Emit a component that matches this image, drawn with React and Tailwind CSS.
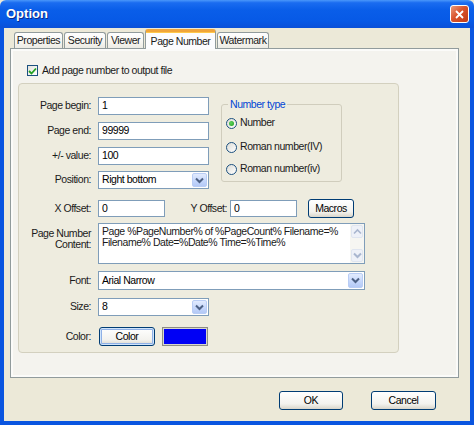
import React from "react";

const Chevron = ({ color = "#4d6185" }) => (
  <svg width="9" height="7" viewBox="0 0 9 7">
    <path d="M1 1.5 L4.5 5 L8 1.5" fill="none" stroke={color} strokeWidth="2" />
  </svg>
);

const ChevronUp = ({ color = "#a9b6cf" }) => (
  <svg width="9" height="7" viewBox="0 0 9 7">
    <path d="M1 5.5 L4.5 2 L8 5.5" fill="none" stroke={color} strokeWidth="1.6" />
  </svg>
);

function TextBox({ value, w, h = "h-[18px]" }) {
  return (
    <div className={`${w} ${h} border border-[#7f9db9] bg-white flex items-center pl-[3px] text-black`}>
      {value}
    </div>
  );
}

function Combo({ value, w, h = "h-[18px]" }) {
  return (
    <div className={`${w} ${h} border border-[#7f9db9] bg-white flex items-center pl-[3px] pr-px text-black`}>
      <span className="flex-1">{value}</span>
      <div className="w-[15px] h-[calc(100%-2px)] rounded-[2px] border border-[#b9cdf5] bg-[linear-gradient(#e2ebfe,#c4d6fb_60%,#b4c9f6)] flex items-center justify-center">
        <Chevron />
      </div>
    </div>
  );
}

function Radio({ checked, label }) {
  return (
    <div className="h-[14px] flex items-center gap-[3px] pl-[4px]">
      <div className="w-[11px] h-[11px] rounded-full border border-[#1c5180] bg-[linear-gradient(135deg,#dcdcd6,#ffffff)] flex items-center justify-center">
        {checked && <div className="w-[5px] h-[5px] rounded-full bg-[radial-gradient(circle_at_40%_40%,#5fd35f,#1e9d1e)]" />}
      </div>
      <span>{label}</span>
    </div>
  );
}

function XPButton({ children, w, focused }) {
  return (
    <div
      className={`${w} h-[19px] rounded-[3px] border border-[#003c74] bg-[linear-gradient(#ffffff,#f3f2ee_70%,#d9d5ca)] flex items-center justify-center text-black ${
        focused ? "shadow-[inset_0_0_0_1px_#cfe4fb,inset_0_0_0_2px_#8fb0e6]" : ""
      }`}
    >
      {children}
    </div>
  );
}

function Label({ children, w = "w-[72px]" }) {
  return <div className={`${w} text-right shrink-0`}>{children}</div>;
}

export default function App() {
  const tabs = [
    { t: "Properties", w: "w-[49px]" },
    { t: "Security", w: "w-[42px]" },
    { t: "Viewer", w: "w-[37px]" },
    { t: "Page Number", w: "w-[71px]", sel: true },
    { t: "Watermark", w: "w-[52px]" },
  ];
  return (
    <div className="w-[474px] h-[425px] flex flex-col font-['Liberation_Sans',Arial,sans-serif] text-[10.5px] tracking-[-0.45px] text-[#1a1a1a] bg-[#ece9d8]">
      {/* Title bar */}
      <div className="h-[28px] shrink-0 rounded-t-[6px] bg-[linear-gradient(#4a97fa_0%,#1a6cf0_10%,#0a5ee9_35%,#0759e6_75%,#0a50d8_100%)] flex items-center justify-between pl-[6px] pr-[5px]">
        <span className="text-white font-bold text-[13px] tracking-normal [text-shadow:1px_1px_0_#0a2a8a]">Option</span>
        <div className="w-[19px] h-[18px] rounded-[3px] border border-white bg-[linear-gradient(135deg,#eb9b7c,#d9532c_45%,#c13c17)] flex items-center justify-center">
          <svg width="9" height="9" viewBox="0 0 9 9">
            <path d="M1 1 L8 8 M8 1 L1 8" stroke="white" strokeWidth="1.8" />
          </svg>
        </div>
      </div>

      {/* Body */}
      <div className="flex-1 border-x-[4px] border-b-[4px] border-[#0a55e0] flex flex-col pt-px">
        {/* Tabs */}
        <div className="h-[19px] flex items-end gap-[1px] pl-[10px] relative z-10">
          {tabs.map((tab) =>
            tab.sel ? (
              <div
                key={tab.t}
                className={`${tab.w} h-[20px] -mb-px border-x border-[#919b9c] border-t-[3px] border-t-[#f0a53a] rounded-t-[3px] bg-[#fcfcfe] flex items-start justify-center pt-[2px] shadow-[inset_0_1px_0_#ffc84a]`}
              >
                {tab.t}
              </div>
            ) : (
              <div
                key={tab.t}
                className={`${tab.w} h-[16px] border border-b-0 border-[#919b9c] rounded-t-[3px] bg-[linear-gradient(#ffffff,#f6f5f0_60%,#ecebe4)] flex items-center justify-center pt-px`}
              >
                {tab.t}
              </div>
            )
          )}
        </div>

        {/* Panel */}
        <div className="ml-[6px] w-[449px] h-[330px] shrink-0 border border-[#919b9c] bg-[#f4f3ee] shadow-[inset_0_0_0_2px_#fbfbf9] flex flex-col">
          {/* checkbox row */}
          <div className="mt-[16px] ml-[16px] h-[11px] flex items-center gap-[4px]">
            <div className="w-[11px] h-[11px] border border-[#1c5180] bg-[linear-gradient(135deg,#e4e3dc,#ffffff)] flex items-center justify-center">
              <svg width="9" height="8" viewBox="0 0 9 8">
                <path d="M1 4 L3.5 6.5 L8 1.5" fill="none" stroke="#21a121" strokeWidth="1.8" />
              </svg>
            </div>
            <span>Add page number to output file</span>
          </div>

          {/* Group box */}
          <div className="mt-[7px] ml-[7px] w-[381px] h-[270px] border border-[#d3d0bf] rounded-[4px] bg-[#eeecdf] flex flex-col">
            <div className="flex">
              {/* left column */}
              <div className="flex flex-col">
                <div className="mt-[13px] flex items-center gap-[7px]">
                  <Label>Page begin:</Label>
                  <TextBox value="1" w="w-[111px]" />
                </div>
                <div className="mt-[7px] flex items-center gap-[7px]">
                  <Label>Page end:</Label>
                  <TextBox value="99999" w="w-[111px]" />
                </div>
                <div className="mt-[7px] flex items-center gap-[7px]">
                  <Label>+/- value:</Label>
                  <TextBox value="100" w="w-[111px]" />
                </div>
                <div className="mt-[6px] flex items-center gap-[7px]">
                  <Label>Position:</Label>
                  <Combo value="Right bottom" w="w-[111px]" />
                </div>
              </div>
              {/* Number type */}
              <fieldset className="ml-[12px] mt-[15px] w-[121px] h-[83px] border border-[#d0cdbd] rounded-[3px] flex flex-col">
                <legend className="ml-[6px] px-[2px] text-[#0046d5] leading-[11px]">Number type</legend>
                <div className="mt-[6px]">
                  <Radio checked label="Number" />
                </div>
                <div className="mt-[10px]">
                  <Radio label="Roman number(IV)" />
                </div>
                <div className="mt-[8px]">
                  <Radio label="Roman number(iv)" />
                </div>
              </fieldset>
            </div>

            {/* Offsets */}
            <div className="mt-[10px] flex items-center">
              <Label>X Offset:</Label>
              <div className="ml-[7px]">
                <TextBox value="0" w="w-[67px]" h="h-[17px]" />
              </div>
              <Label w="w-[62px]">Y Offset:</Label>
              <div className="ml-[3px]">
                <TextBox value="0" w="w-[67px]" h="h-[17px]" />
              </div>
              <div className="ml-[11px]">
                <XPButton w="w-[46px]">Macros</XPButton>
              </div>
            </div>

            {/* Content */}
            <div className="mt-[5px] flex items-start gap-[7px]">
              <div className="w-[72px] text-right leading-[11px] pt-[5px]">
                Page Number
                <br />
                Content:
              </div>
              <div className="w-[267px] h-[41px] border border-[#7f9db9] bg-white flex">
                <div className="flex-1 pl-[3px] pt-[2px] leading-[11px]">
                  Page %PageNumber% of %PageCount% Filename=%
                  <br />
                  Filename% Date=%Date% Time=%Time%
                </div>
                <div className="w-[14px] bg-[#f6f6f2] flex flex-col justify-between p-px">
                  <div className="h-[13px] rounded-[2px] border border-[#dfe5f0] bg-[#eef1f8] flex items-center justify-center">
                    <ChevronUp />
                  </div>
                  <div className="h-[13px] rounded-[2px] border border-[#dfe5f0] bg-[#eef1f8] flex items-center justify-center">
                    <Chevron color="#a9b6cf" />
                  </div>
                </div>
              </div>
            </div>

            {/* Font */}
            <div className="mt-[7px] flex items-center gap-[7px]">
              <Label>Font:</Label>
              <Combo value="Arial Narrow" w="w-[267px]" h="h-[19px]" />
            </div>

            {/* Size */}
            <div className="mt-[8px] flex items-center gap-[7px]">
              <Label>Size:</Label>
              <Combo value="8" w="w-[111px]" />
            </div>

            {/* Color */}
            <div className="mt-[11px] flex items-center">
              <Label>Color:</Label>
              <div className="ml-[8px]">
                <XPButton w="w-[56px]" focused>
                  Color
                </XPButton>
              </div>
              <div className="ml-[7px] w-[46px] h-[19px] border border-[#8c8c84] p-px bg-[#d8d6cc]">
                <div className="w-full h-full bg-[#0000f5]" />
              </div>
            </div>
          </div>
        </div>

        {/* Buttons */}
        <div className="mt-[13px] flex justify-end pr-[34px] gap-[28px]">
          <XPButton w="w-[64px]">OK</XPButton>
          <XPButton w="w-[65px]">Cancel</XPButton>
        </div>
      </div>
    </div>
  );
}
